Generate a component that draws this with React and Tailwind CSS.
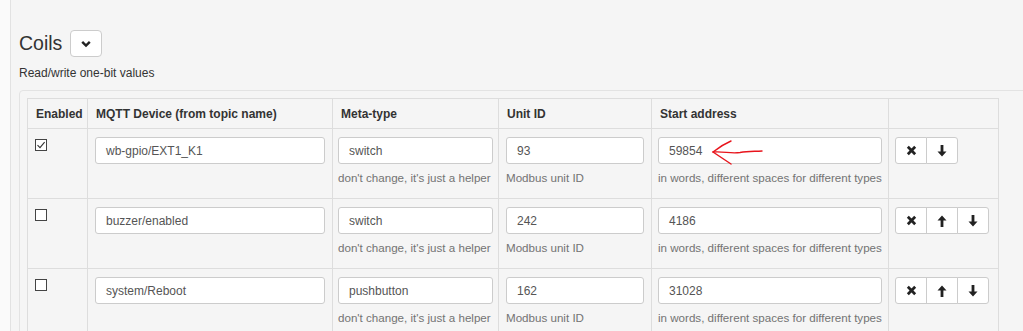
import React from 'react';

const rows = [
    { checked: true, topic: 'wb-gpio/EXT1_K1', meta: 'switch', unit: '93', addr: '59854', up: false, arrow: true },
    { checked: false, topic: 'buzzer/enabled', meta: 'switch', unit: '242', addr: '4186', up: true },
    { checked: false, topic: 'system/Reboot', meta: 'pushbutton', unit: '162', addr: '31028', up: true },
];

function Check({ checked }) {
    return (
        <span className="mt-[2px] flex h-[12px] w-[12px] items-center justify-center border border-[#444] bg-white">
            {checked && (
                <svg width="10" height="10" viewBox="0 0 10 10">
                    <path d="M1.5 5.2 L4 7.6 L8.6 2.2" fill="none" stroke="#333" strokeWidth="1.1" />
                </svg>
            )}
        </span>
    );
}

function RemoveIcon() {
    return (
        <svg width="11" height="11" viewBox="0 0 12 12">
            <path d="M2 2 L10 10 M10 2 L2 10" stroke="#222" strokeWidth="3" strokeLinecap="butt" />
        </svg>
    );
}

function ArrowIcon({ up }) {
    return (
        <svg width="10" height="12" viewBox="0 0 10 12" style={{ transform: up ? 'rotate(180deg)' : undefined }}>
            <path d="M3.6 0 H6.4 V6.5 H9.5 L5 11.5 L0.5 6.5 H3.6 Z" fill="#222" />
        </svg>
    );
}

function Field({ value, help }) {
    return (
        <div>
            <div className="flex h-[27px] items-center rounded-[3px] border border-[#ccc] bg-white px-[10px] text-[12px] text-[#555]">
                {value}
            </div>
            {help && <div className="mt-[5px] whitespace-nowrap text-[11.6px] leading-[17px] text-[#737373]">{help}</div>}
        </div>
    );
}

function Btn({ children, first, last }) {
    return (
        <div className={`flex h-[27px] w-[32px] items-center justify-center border border-[#ccc] bg-white ${first ? 'rounded-l-[3px]' : '-ml-px'} ${last ? 'rounded-r-[3px]' : ''}`}>
            {children}
        </div>
    );
}

export default function App() {
    return (
        <div className="h-[331px] w-[1023px] overflow-hidden bg-[#fafafa] pl-[10px] font-['Liberation_Sans',Arial,sans-serif] text-[#333]">
            <div className="h-full border-l border-[#e2e2e2] bg-[#f5f5f5] pl-[8px] pt-[30px]">
                <div className="flex h-[27px] items-center">
                    <span className="text-[19.5px] leading-none">Coils</span>
                    <button className="ml-[8px] flex h-[27px] w-[32px] items-center justify-center rounded-[4px] border border-[#ccc] bg-white">
                        <svg width="10" height="8" viewBox="0 0 10 8">
                            <path d="M1.2 1.8 L5 5.6 L8.8 1.8" fill="none" stroke="#222" strokeWidth="2.4" />
                        </svg>
                    </button>
                </div>
                <p className="mt-[8px] text-[12px] leading-[17px]">Read/write one-bit values</p>
                <div className="mt-[8px] w-[1030px] rounded-[4px] border border-[#e3e3e3] bg-[#f5f5f5] p-[7px]">
                    <table className="w-[971px] table-fixed border-collapse border border-[#ddd] text-[12px]">
                        <colgroup>
                            <col className="w-[60px]" />
                            <col className="w-[245px]" />
                            <col className="w-[166px]" />
                            <col className="w-[153px]" />
                            <col className="w-[237px]" />
                            <col className="w-[110px]" />
                        </colgroup>
                        <thead>
                            <tr className="h-[30px]">
                                <th className="border border-[#ddd] px-[8px] text-left font-bold">Enabled</th>
                                <th className="border border-[#ddd] px-[8px] text-left font-bold">MQTT Device (from topic name)</th>
                                <th className="border border-[#ddd] px-[8px] text-left font-bold">Meta-type</th>
                                <th className="border border-[#ddd] px-[8px] text-left font-bold">Unit ID</th>
                                <th className="border border-[#ddd] px-[8px] text-left font-bold">Start address</th>
                                <th className="border border-[#ddd] px-[8px]"></th>
                            </tr>
                        </thead>
                        <tbody>
                            {rows.map((r) => (
                                <tr key={r.topic} className="h-[70px] align-top">
                                    <td className="border border-[#ddd] px-[7px] pt-[8px]"><Check checked={r.checked} /></td>
                                    <td className="border border-[#ddd] px-[7px] pt-[8px]"><Field value={r.topic} /></td>
                                    <td className="border border-[#ddd] px-[5px] pt-[8px]"><Field value={r.meta} help="don't change, it's just a helper" /></td>
                                    <td className="border border-[#ddd] px-[7px] pt-[8px]"><Field value={r.unit} help="Modbus unit ID" /></td>
                                    <td className="relative border border-[#ddd] px-[6px] pt-[8px]">
                                        <Field value={r.addr} help="in words, different spaces for different types" />
                                        {r.arrow && (
                                            <svg className="absolute left-[58px] top-[10px]" width="56" height="28" viewBox="0 0 56 28">
                                                <path d="M3 13 C14 12 20 15 30 13.5 C38 12 44 12.5 52 12" fill="none" stroke="#e8141c" strokeWidth="1.4" strokeLinecap="round" />
                                                <path d="M21 2 C14 5 8 9 3 13 C9 17 15 21 21 25" fill="none" stroke="#e8141c" strokeWidth="1.4" strokeLinecap="round" />
                                            </svg>
                                        )}
                                    </td>
                                    <td className="border border-[#ddd] px-[6px] pt-[8px]">
                                        <div className="flex">
                                            <Btn first><RemoveIcon /></Btn>
                                            {r.up && <Btn><ArrowIcon up /></Btn>}
                                            <Btn last><ArrowIcon /></Btn>
                                        </div>
                                    </td>
                                </tr>
                            ))}
                        </tbody>
                    </table>
                </div>
            </div>
        </div>
    );
}
